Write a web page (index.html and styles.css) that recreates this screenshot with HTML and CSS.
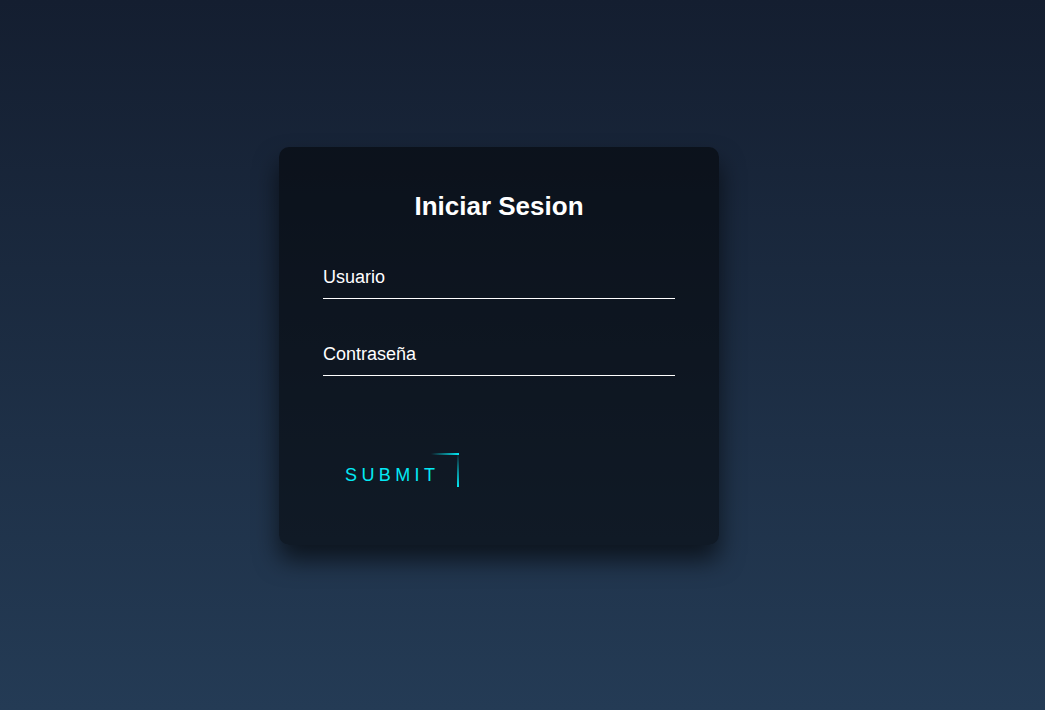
FILE: index.html
```html
<!DOCTYPE html>
<html lang="es">
<head>
    <meta charset="UTF-8">
    <meta name="viewport" content="width=device-width, initial-scale=1.0">
    <title>Iniciar Sesion</title>
    <link rel="stylesheet" href="styles.css">
</head>
<body>
    <div class="login-box">
        <h2>Iniciar Sesion</h2>
        <form>
            <div class="user-box">
                <input type="text" name="usuario" required>
                <label>Usuario</label>
            </div>
            <div class="user-box">
                <input type="password" name="clave" required>
                <label>Contraseña</label>
            </div>
            <a href="#" class="submit">
                <span class="line-top"></span>
                <span class="line-right"></span>
                Submit
            </a>
        </form>
    </div>
</body>
</html>
```

FILE: styles.css
```css
html {
    height: 100%;
}
body {
    margin: 0;
    padding: 147px 0 0 279px;
    min-height: 100%;
    box-sizing: border-box;
    font-family: "Liberation Sans", Arial, sans-serif;
    background: linear-gradient(#141e30, #243b55);
}
.login-box {
    width: 440px;
    height: 398px;
    padding: 44px;
    box-sizing: border-box;
    background: rgba(0, 0, 0, .5);
    box-shadow: 0 15px 25px rgba(0, 0, 0, .6);
    border-radius: 10px;
}
.login-box h2 {
    margin: 0 0 36px;
    padding: 0;
    color: #fff;
    font-size: 26px;
    line-height: 30px;
    text-align: center;
}
.user-box {
    position: relative;
}
.user-box input {
    display: block;
    width: 100%;
    padding: 10px 0;
    font-size: 18px;
    line-height: 21px;
    color: #fff;
    margin-bottom: 35px;
    border: none;
    border-bottom: 1px solid #fff;
    outline: none;
    background: transparent;
    font-family: inherit;
}
.user-box label {
    position: absolute;
    top: 0;
    left: 0;
    padding: 10px 0;
    font-size: 18px;
    line-height: 21px;
    color: #fff;
    pointer-events: none;
}
.submit {
    position: relative;
    display: inline-block;
    margin: 42px 0 0 2px;
    padding: 12px 20px 10px;
    color: #03e9f4;
    font-size: 18px;
    line-height: 21px;
    text-decoration: none;
    text-transform: uppercase;
    letter-spacing: 4.4px;
    overflow: hidden;
}
.submit span {
    position: absolute;
    display: block;
}
.line-top {
    top: 0;
    right: 0;
    width: 28px;
    height: 2px;
    background: linear-gradient(90deg, transparent, #03e9f4);
}
.line-right {
    top: 0;
    right: 0;
    width: 2px;
    height: 34px;
    background: linear-gradient(180deg, transparent, #03e9f4);
}
```
